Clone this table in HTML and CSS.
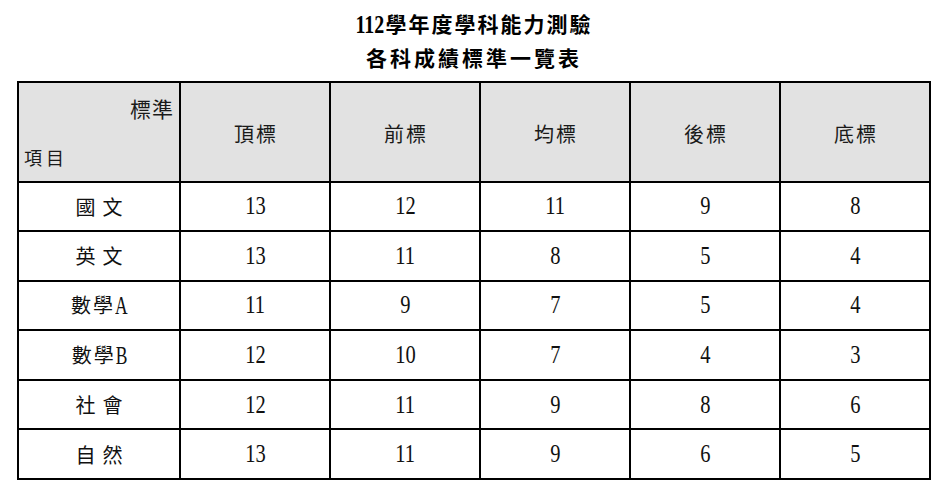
FILE: index.html
```html
<!DOCTYPE html>
<html lang="zh-Hant">
<head>
<meta charset="utf-8">
<title>112學年度學科能力測驗 各科成績標準一覽表</title>
<link rel="stylesheet" href="styles.css">
</head>
<body>
<div class="title">
  <div class="title-line first"><span class="tnum">112</span>學年度學科能力測驗</div>
  <div class="title-line wide">各科成績標準一覽表</div>
</div>
<table class="scores">
  <colgroup>
    <col class="c-first">
    <col class="c-std"><col class="c-std"><col class="c-std"><col class="c-std"><col class="c-std">
  </colgroup>
  <thead>
    <tr>
      <th class="corner">
        <div class="corner-in">
          <span class="corner-top">標準</span>
          <span class="corner-bottom">項目</span>
        </div>
      </th>
      <th><span class="hlabel">頂標</span></th>
      <th><span class="hlabel">前標</span></th>
      <th><span class="hlabel">均標</span></th>
      <th><span class="hlabel">後標</span></th>
      <th><span class="hlabel">底標</span></th>
    </tr>
  </thead>
  <tbody>
    <tr><td class="subj"><span class="sp">國文</span></td><td><span class="n">13</span></td><td><span class="n">12</span></td><td><span class="n">11</span></td><td><span class="n">9</span></td><td><span class="n">8</span></td></tr>
    <tr><td class="subj"><span class="sp">英文</span></td><td><span class="n">13</span></td><td><span class="n">11</span></td><td><span class="n">8</span></td><td><span class="n">5</span></td><td><span class="n">4</span></td></tr>
    <tr><td class="subj"><span class="tight">數學<span class="lat">A</span></span></td><td><span class="n">11</span></td><td><span class="n">9</span></td><td><span class="n">7</span></td><td><span class="n">5</span></td><td><span class="n">4</span></td></tr>
    <tr><td class="subj"><span class="tight">數學<span class="lat">B</span></span></td><td><span class="n">12</span></td><td><span class="n">10</span></td><td><span class="n">7</span></td><td><span class="n">4</span></td><td><span class="n">3</span></td></tr>
    <tr><td class="subj"><span class="sp">社會</span></td><td><span class="n">12</span></td><td><span class="n">11</span></td><td><span class="n">9</span></td><td><span class="n">8</span></td><td><span class="n">6</span></td></tr>
    <tr><td class="subj"><span class="sp">自然</span></td><td><span class="n">13</span></td><td><span class="n">11</span></td><td><span class="n">9</span></td><td><span class="n">6</span></td><td><span class="n">5</span></td></tr>
  </tbody>
</table>
</body>
</html>
```
FILE: styles.css
```css
html, body {
  margin: 0;
  padding: 0;
  background: #ffffff;
}
body {
  font-family: "Liberation Serif", "Noto Sans CJK TC", serif;
  color: #111111;
}
.title {
  padding-top: 8px;
  text-align: center;
  font-family: "Liberation Serif", "Noto Sans CJK TC", serif;
  font-weight: 700;
  font-size: 21px;
  line-height: 34px;
  color: #000;
}
.title-line {
  height: 34px;
}
.title-line.first {
  letter-spacing: 2px;
  text-indent: 2px;
}
.title-line.wide {
  letter-spacing: 3px;
  text-indent: 3px;
}
.tnum {
  display: inline-block;
  font-size: 25px;
  letter-spacing: 0;
  transform: scaleX(0.8);
  margin: 0 -3px 0 -4px;
  vertical-align: -1px;
}
.scores {
  margin: 5px 0 0 17px;
  border-collapse: collapse;
  table-layout: fixed;
  width: 914px;
}
.c-first { width: 162px; }
.c-std { width: 150px; }
.scores th,
.scores td {
  border: 2px solid #000;
  padding: 0;
  text-align: center;
  vertical-align: middle;
}
.scores th {
  height: 97.5px;
  background: #e2e2e2;
  font-weight: 400;
  font-family: "Noto Sans CJK TC", sans-serif;
  font-size: 20px;
  color: #1a1a1a;
}
.scores td {
  height: 47.6px;
  font-size: 20px;
}
.hlabel {
  letter-spacing: 2px;
  margin-right: -2px;
  position: relative;
  top: 2px;
}
.corner {
  background: linear-gradient(to top right, #e2e2e2 calc(50% - 1.2px), #111 50%, #e2e2e2 calc(50% + 1.2px));
}
.corner-in {
  display: flex;
  flex-direction: column;
  justify-content: space-between;
  height: 97px;
  padding: 13px 5px 11px 5px;
  box-sizing: border-box;
  line-height: 24px;
}
.corner-top {
  align-self: flex-end;
  font-size: 21px;
  letter-spacing: 1px;
}
.corner-bottom {
  align-self: flex-start;
  font-size: 18px;
  letter-spacing: 4px;
}
.subj {
  font-family: "Noto Sans CJK TC", sans-serif;
  font-size: 19px;
  font-weight: 400;
}
.sp {
  letter-spacing: 7px;
  margin-right: -7px;
}
.tight {
  letter-spacing: 2px;
  margin-right: -2px;
}
.lat {
  display: inline-block;
  font-family: "Liberation Serif", serif;
  font-size: 25px;
  transform: scaleX(0.7);
  margin: 0 -3px;
  vertical-align: -1px;
}
.n {
  display: inline-block;
  font-family: "Liberation Serif", serif;
  font-size: 25px;
  transform: scaleX(0.82);
  line-height: 1;
  color: #111;
}
```
